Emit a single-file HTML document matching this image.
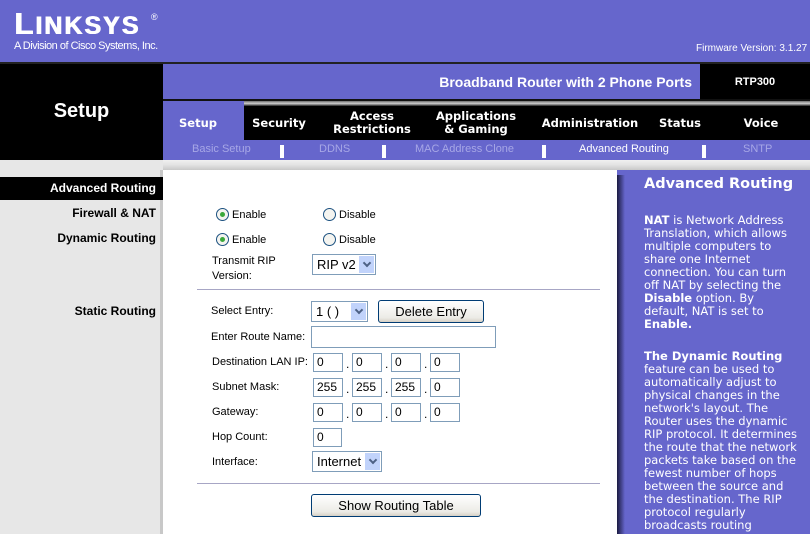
<!DOCTYPE html>
<html><head><meta charset="utf-8">
<style>
*{margin:0;padding:0;box-sizing:border-box}
body{width:810px;height:534px;overflow:hidden;position:relative;background:#fff;font-family:"Liberation Sans",Arial,sans-serif;font-size:12px;color:#000}
.a{position:absolute}
.v{font-family:"DejaVu Sans",Verdana,sans-serif}
.tab{position:absolute;top:102px;height:38px;color:#fff;font-family:"DejaVu Sans",Verdana,sans-serif;font-weight:bold;font-size:11.5px;text-align:center;line-height:13px;display:flex;align-items:center;justify-content:center;white-space:nowrap}
.sub{position:absolute;top:143px;font-size:11px;color:#a7a7e6}
.sep{position:absolute;top:145px;width:4px;height:13px;background:#fff}
.lab{position:absolute;right:654px;font-weight:bold;font-size:12px;color:#000}
.radio{position:absolute;width:13px;height:13px;border:1px solid #1c5180;border-radius:50%;background:#f4f4f0}
.radio.on::after{content:"";position:absolute;left:3px;top:3px;width:5px;height:5px;border-radius:50%;background:#3aa83a}
.t{position:absolute;font-size:11px}
.in{position:absolute;height:19px;border:1px solid #7f9db9;background:#fff;font-size:12px;padding-left:3px;line-height:17px}
.sel{position:absolute;height:21px;border:1px solid #7f9db9;background:#fff;font-size:13px;padding-left:4px;line-height:19px}
.sel::after{content:"";position:absolute;right:1px;top:1px;width:15px;height:17px;background:#c1d3fb}
.sel b{position:absolute;right:5px;top:5px;width:6px;height:6px;border-right:2px solid #4d6185;border-bottom:2px solid #4d6185;transform:rotate(45deg);z-index:1}
.btn{position:absolute;height:23px;border:1px solid #003c74;border-radius:3px;background:linear-gradient(#fff,#ecebe6 80%,#d6d0c5);font-size:13px;text-align:center;line-height:21px}
.dot{position:absolute;font-size:12px}
.hr{position:absolute;left:197px;width:403px;height:1px;background:#a7a6c5}
</style></head><body>
<div class="a" style="left:0;top:0;width:810px;height:64px;background:#6666cc"></div>
<div class="a" style="left:14px;top:9px;font-size:31px;font-weight:bold;color:#fff;letter-spacing:2px;line-height:30px;text-shadow:1px 0 0 #fff,0.5px 0 0 #fff">L<span style="font-size:25px">INKSYS</span></div>
<div class="a" style="left:151px;top:12px;font-size:9px;color:#fff">®</div>
<div class="a" style="left:14px;top:40px;font-size:11px;color:#fff;letter-spacing:-0.5px">A Division of Cisco Systems, Inc.</div>
<div class="a" style="left:696px;top:43px;font-size:10px;color:#fff">Firmware Version: 3.1.27</div>
<div class="a" style="left:0;top:62px;width:810px;height:2px;background:#222"></div>
<div class="a" style="left:0;top:64px;width:163px;height:96px;background:#000"></div>
<div class="a" style="left:0;top:100px;width:163px;text-align:center;font-size:20px;font-weight:bold;color:#fff">Setup</div>
<div class="a" style="left:163px;top:64px;width:647px;height:35px;background:#6666cc"></div>
<div class="a" style="left:400px;width:292px;text-align:right;top:74px;font-size:14px;font-weight:bold;color:#fff;white-space:nowrap">Broadband Router with 2 Phone Ports</div>
<div class="a" style="left:700px;top:64px;width:110px;height:35px;background:#000"></div>
<div class="a" style="left:700px;top:76px;width:110px;text-align:center;font-size:11px;font-weight:bold;color:#fff">RTP300</div>
<div class="a" style="left:163px;top:99px;width:647px;height:2px;background:#111"></div>
<div class="a" style="left:163px;top:101px;width:647px;height:39px;background:#000"></div>
<div class="a" style="left:243px;top:101px;width:567px;height:5px;background:linear-gradient(#6c6c6c,#d0d0d0,#222)"></div>
<div class="a" style="left:163px;top:101px;width:81px;height:39px;background:#6666cc"></div>
<div class="tab" style="left:163px;width:70px;top:104px">Setup</div>
<div class="tab" style="left:244px;width:70px;top:104px">Security</div>
<div class="tab" style="left:322px;width:100px;top:104px">Access<br>Restrictions</div>
<div class="tab" style="left:430px;width:92px;top:104px">Applications<br>&amp; Gaming</div>
<div class="tab" style="left:537px;width:106px;top:104px">Administration</div>
<div class="tab" style="left:650px;width:60px;top:104px">Status</div>
<div class="tab" style="left:725px;width:72px;top:104px">Voice</div>
<div class="a" style="left:163px;top:140px;width:647px;height:20px;background:#6666cc"></div>
<div class="sub" style="left:192px">Basic Setup</div>
<div class="sep" style="left:280px"></div>
<div class="sub" style="left:319px">DDNS</div>
<div class="sep" style="left:382px"></div>
<div class="sub" style="left:415px">MAC Address Clone</div>
<div class="sep" style="left:542px"></div>
<div class="sub" style="left:579px;color:#fff">Advanced Routing</div>
<div class="sep" style="left:702px"></div>
<div class="sub" style="left:743px">SNTP</div>
<div class="a" style="left:0;top:160px;width:810px;height:10px;background:linear-gradient(#f0f0f0,#e2e2e2,#c8c8c8)"></div>
<div class="a" style="left:0;top:160px;width:163px;height:374px;background:#e7e7e7"></div>
<div class="a" style="left:160px;top:170px;width:3px;height:364px;background:#c8c8c8"></div>
<div class="a" style="left:0;top:177px;width:163px;height:23px;background:#000"></div>
<div class="lab" style="top:181px;color:#fff">Advanced Routing</div>
<div class="lab" style="top:206px">Firewall &amp; NAT</div>
<div class="lab" style="top:231px">Dynamic Routing</div>
<div class="lab" style="top:304px">Static Routing</div>
<div class="a" style="left:617px;top:175px;width:193px;height:359px;background:#6666cc"></div>
<div class="a" style="left:617px;top:175px;width:8px;height:359px;background:linear-gradient(90deg,#1a1a40,#6666cc)"></div>
<div class="a" style="left:617px;top:170px;width:193px;height:5px;background:#6666cc"></div>
<div class="a v" style="left:644px;top:176px;font-size:14.5px;font-weight:bold;color:#fff;white-space:nowrap">Advanced Routing</div>
<div class="a v" style="left:644px;top:214px;font-size:11.5px;line-height:13px;color:#fff;white-space:nowrap"><b>NAT</b> is Network Address<br>Translation, which allows<br>multiple computers to<br>share one Internet<br>connection. You can turn<br>off NAT by selecting the<br><b>Disable</b> option. By<br>default, NAT is set to<br><b>Enable.</b></div>
<div class="a v" style="left:644px;top:350px;font-size:11.5px;line-height:13px;color:#fff;white-space:nowrap"><b>The Dynamic Routing</b><br>feature can be used to<br>automatically adjust to<br>physical changes in the<br>network's layout. The<br>Router uses the dynamic<br>RIP protocol. It determines<br>the route that the network<br>packets take based on the<br>fewest number of hops<br>between the source and<br>the destination. The RIP<br>protocol regularly<br>broadcasts routing</div>
<div class="radio on" style="left:216px;top:208px"></div><div class="t" style="left:232px;top:209px">Enable</div>
<div class="radio" style="left:323px;top:208px"></div><div class="t" style="left:339px;top:209px">Disable</div>
<div class="radio on" style="left:216px;top:233px"></div><div class="t" style="left:232px;top:234px">Enable</div>
<div class="radio" style="left:323px;top:233px"></div><div class="t" style="left:339px;top:234px">Disable</div>
<div class="t" style="left:212px;top:254px;line-height:15px">Transmit RIP<br>Version:</div>
<div class="sel" style="left:312px;top:254px;width:64px">RIP v2<b></b></div>
<div class="hr" style="top:289px"></div>
<div class="t" style="left:211px;top:305px">Select Entry:</div>
<div class="sel" style="left:311px;top:301px;width:57px">1 ( )<b></b></div>
<div class="btn" style="left:378px;top:300px;width:106px">Delete Entry</div>
<div class="t" style="left:211px;top:331px">Enter Route Name:</div>
<div class="in" style="left:311px;top:326px;width:185px;height:22px"></div>
<div class="t" style="left:212px;top:356px">Destination LAN IP:</div>
<div class="t" style="left:212px;top:381px">Subnet Mask:</div>
<div class="t" style="left:212px;top:406px">Gateway:</div>
<div class="t" style="left:212px;top:431px">Hop Count:</div>
<div class="t" style="left:212px;top:456px">Interface:</div>
<div class="in" style="left:313px;top:353px;width:30px">0</div><div class="dot" style="left:346px;top:357px">.</div>
<div class="in" style="left:352px;top:353px;width:30px">0</div><div class="dot" style="left:385px;top:357px">.</div>
<div class="in" style="left:391px;top:353px;width:30px">0</div><div class="dot" style="left:424px;top:357px">.</div>
<div class="in" style="left:430px;top:353px;width:30px">0</div>
<div class="in" style="left:313px;top:378px;width:30px">255</div><div class="dot" style="left:346px;top:382px">.</div>
<div class="in" style="left:352px;top:378px;width:30px">255</div><div class="dot" style="left:385px;top:382px">.</div>
<div class="in" style="left:391px;top:378px;width:30px">255</div><div class="dot" style="left:424px;top:382px">.</div>
<div class="in" style="left:430px;top:378px;width:30px">0</div>
<div class="in" style="left:313px;top:403px;width:30px">0</div><div class="dot" style="left:346px;top:407px">.</div>
<div class="in" style="left:352px;top:403px;width:30px">0</div><div class="dot" style="left:385px;top:407px">.</div>
<div class="in" style="left:391px;top:403px;width:30px">0</div><div class="dot" style="left:424px;top:407px">.</div>
<div class="in" style="left:430px;top:403px;width:30px">0</div>
<div class="in" style="left:313px;top:428px;width:29px">0</div>
<div class="sel" style="left:312px;top:451px;width:70px">Internet<b></b></div>
<div class="hr" style="top:483px"></div>
<div class="btn" style="left:311px;top:494px;width:170px">Show Routing Table</div>
</body></html>
